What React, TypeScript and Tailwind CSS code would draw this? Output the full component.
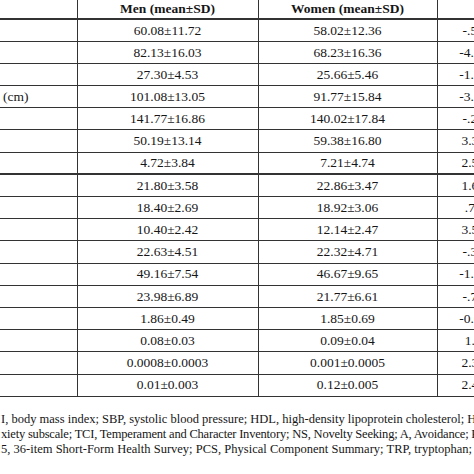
import React from 'react';

type Row = { label?: string; men: string; women: string; stat: string; thick?: boolean };

const rows: Row[] = [
  { men: '60.08±11.72', women: '58.02±12.36', stat: '-.53' },
  { men: '82.13±16.03', women: '68.23±16.36', stat: '-4.55' },
  { men: '27.30±4.53', women: '25.66±5.46', stat: '-1.59' },
  { label: '(cm)', men: '101.08±13.05', women: '91.77±15.84', stat: '-3.31' },
  { men: '141.77±16.86', women: '140.02±17.84', stat: '-.22' },
  { men: '50.19±13.14', women: '59.38±16.80', stat: '3.37' },
  { men: '4.72±3.84', women: '7.21±4.74', stat: '2.56', thick: true },
  { men: '21.80±3.58', women: '22.86±3.47', stat: '1.64' },
  { men: '18.40±2.69', women: '18.92±3.06', stat: '.75' },
  { men: '10.40±2.42', women: '12.14±2.47', stat: '3.54' },
  { men: '22.63±4.51', women: '22.32±4.71', stat: '-.35' },
  { men: '49.16±7.54', women: '46.67±9.65', stat: '-1.54' },
  { men: '23.98±6.89', women: '21.77±6.61', stat: '-.78' },
  { men: '1.86±0.49', women: '1.85±0.69', stat: '-0.03' },
  { men: '0.08±0.03', women: '0.09±0.04', stat: '1.2' },
  { men: '0.0008±0.0003', women: '0.001±0.0005', stat: '2.34' },
  { men: '0.01±0.003', women: '0.12±0.005', stat: '2.41' },
];

const notes = [
  { text: 'I, body mass index; SBP, systolic blood pressure; HDL, high-density lipoprotein cholesterol; HAM-A,', cls: 'w-[504px]' },
  { text: 'xiety subscale; TCI, Temperament and Character Inventory; NS, Novelty Seeking; A, Avoidance; RD,', cls: 'w-[486px] tracking-[-0.2px]' },
  { text: '5, 36-item Short-Form Health Survey; PCS, Physical Component Summary; TRP, tryptophan;', cls: 'w-[472px]' },
];

export default function App() {
  return (
    <div className="w-[474px] h-[474px] overflow-hidden bg-white text-[#161616] font-['Liberation_Serif',serif]">
      <table className="table-fixed border-collapse w-[509px] text-[13.5px]">
        <colgroup>
          <col className="w-[77px]" />
          <col className="w-[181px]" />
          <col className="w-[179px]" />
          <col className="w-[72px]" />
        </colgroup>
        <thead>
          <tr className="h-[19px]">
            <th className="border-b-2 border-[#333]" />
            <th className="border-b-2 border-l-[1.5px] border-[#333] font-bold leading-none">Men (mean±SD)</th>
            <th className="border-b-2 border-l-[1.5px] border-[#333] font-bold leading-none">Women (mean±SD)</th>
            <th className="border-b-2 border-l-[1.5px] border-[#333]" />
          </tr>
        </thead>
        <tbody>
          {rows.map((r, i) => {
            const b = r.thick ? 'border-b-2' : i === rows.length - 1 ? 'border-b-[1.5px]' : 'border-b';
            return (
              <tr key={i} className="h-[22.2px]">
                <td className={`${b} border-[#333] pl-[3px] leading-none whitespace-nowrap`}>{r.label}</td>
                <td className={`${b} border-l-[1.5px] border-[#333] text-center leading-none`}>{r.men}</td>
                <td className={`${b} border-l-[1.5px] border-[#333] text-center leading-none`}>{r.women}</td>
                <td className={`${b} border-l-[1.5px] border-[#333] text-center leading-none`}>{r.stat}</td>
              </tr>
            );
          })}
        </tbody>
      </table>
      <div className="mt-[15px] flex flex-col text-[12.5px] leading-[15px]">
        {notes.map((n, i) => (
          <p key={i} className={`${n.cls} whitespace-nowrap text-justify [text-align-last:justify] pl-[1px]`}>
            {n.text}
          </p>
        ))}
      </div>
    </div>
  );
}
